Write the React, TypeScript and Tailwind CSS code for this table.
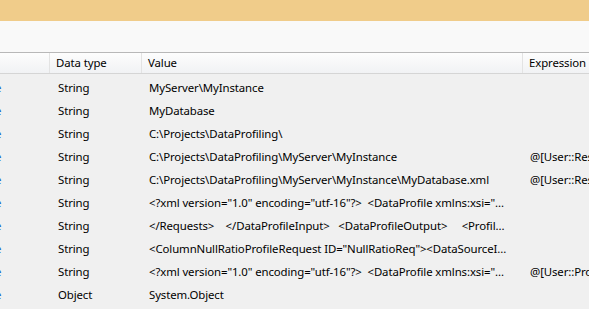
import React from "react";

const rows: { type: string; value: string; expr: string }[] = [
  { type: "String", value: "MyServer\\MyInstance", expr: "" },
  { type: "String", value: "MyDatabase", expr: "" },
  { type: "String", value: "C:\\Projects\\DataProfiling\\", expr: "" },
  { type: "String", value: "C:\\Projects\\DataProfiling\\MyServer\\MyInstance", expr: "@[User::ResultFolder]" },
  { type: "String", value: "C:\\Projects\\DataProfiling\\MyServer\\MyInstance\\MyDatabase.xml", expr: "@[User::ResultFolder]" },
  { type: "String", value: "<?xml version=\"1.0\" encoding=\"utf-16\"?>  <DataProfile xmlns:xsi=\"...", expr: "" },
  { type: "String", value: "</Requests>    </DataProfileInput>   <DataProfileOutput>     <Profil...", expr: "" },
  { type: "String", value: "<ColumnNullRatioProfileRequest ID=\"NullRatioReq\"><DataSourceI...", expr: "" },
  { type: "String", value: "<?xml version=\"1.0\" encoding=\"utf-16\"?>  <DataProfile xmlns:xsi=\"...", expr: "@[User::ProfileXml]" },
  { type: "Object", value: "System.Object", expr: "" },
];

export default function App() {
  return (
    <div
      className="w-[589px] h-[309px] overflow-hidden bg-[#f0f0f0] text-[11.4px] tracking-[-0.1px] text-black"
      style={{ fontFamily: '"Noto Sans", "Open Sans", sans-serif' }}
    >
      <div className="h-[21px] bg-[#f0cc8a]" />
      <div className="h-[32px] bg-[#f9f9f9] border-b border-[#b8b8b8]" />
      <div className="grid grid-cols-[50px_92px_381px_1fr] h-[21px] bg-gradient-to-b from-[#fdfdfd] to-[#f1f2f4] border-b border-[#d5d5d5]">
        <div className="border-r border-[#e3e3e3]" />
        <div className="border-r border-[#e3e3e3] pl-[6px] flex items-center whitespace-nowrap">Data type</div>
        <div className="border-r border-[#e3e3e3] pl-[6px] flex items-center whitespace-nowrap">Value</div>
        <div className="pl-[6px] flex items-center whitespace-nowrap overflow-hidden">Expression</div>
      </div>
      <div className="pt-[2px]">
        {rows.map((r, i) => (
          <div key={i} className="grid grid-cols-[50px_92px_381px_1fr] h-[23px] items-center whitespace-pre">
            <div className="overflow-hidden">
              <span className="inline-block ml-[-5px] text-[#1a66c8]">e</span>
            </div>
            <div className="pl-[8px]">{r.type}</div>
            <div className="pl-[7px] overflow-hidden">{r.value}</div>
            <div className="pl-[7px] overflow-hidden">{r.expr}</div>
          </div>
        ))}
      </div>
    </div>
  );
}
